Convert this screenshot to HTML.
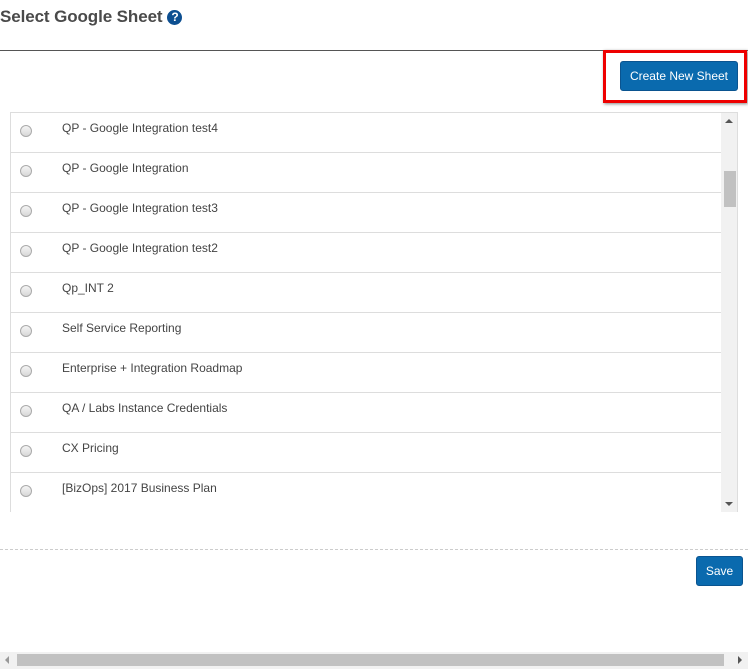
<!DOCTYPE html>
<html><head><style>
body{margin:0;width:748px;height:669px;overflow:hidden;background:#fff;font-family:"Liberation Sans",sans-serif;position:relative}
.a{position:absolute}
h1{position:absolute;left:0;top:7px;margin:0;font-size:17px;font-weight:bold;color:#4a4a4a;letter-spacing:-0.1px}
.q{display:inline-block;width:15px;height:15px;border-radius:50%;background:#0d4f91;color:#fff;font-size:12px;text-align:center;line-height:15px;vertical-align:1px;margin-left:5px}
.btn{background:#0a6aae;border:1px solid #0a5490;border-radius:3px;color:#fff;font-size:12px;text-align:center;box-sizing:border-box}
.row{position:absolute;left:0;width:710px;height:40px;border-bottom:1px solid #ddd;box-sizing:border-box}
.row span{position:absolute;left:51px;top:8px;font-size:12px;color:#444}
.row i{position:absolute;left:9px;top:12px;width:10px;height:10px;border-radius:50%;border:1px solid #aaa;background:linear-gradient(#f4f4f4,#d8d8d8)}
</style></head><body>
<h1>Select Google Sheet<span class="q">?</span></h1>
<div class="a" style="left:0;top:50px;width:748px;height:1px;background:#555"></div>
<div class="a" style="left:603px;top:50px;width:138px;height:47px;border:3px solid #e00;box-shadow:1px 1px 3px #888"></div>
<div class="a btn" style="left:620px;top:61px;width:118px;height:30px;line-height:28px">Create New Sheet</div>
<div class="a" style="left:10px;top:112px;width:728px;height:400px;border:1px solid #ddd;border-bottom:none;box-sizing:border-box;overflow:hidden">
<div class="row" style="top:0"><i></i><span>QP - Google Integration test4</span></div>
<div class="row" style="top:40px"><i></i><span>QP - Google Integration</span></div>
<div class="row" style="top:80px"><i></i><span>QP - Google Integration test3</span></div>
<div class="row" style="top:120px"><i></i><span>QP - Google Integration test2</span></div>
<div class="row" style="top:160px"><i></i><span>Qp_INT 2</span></div>
<div class="row" style="top:200px"><i></i><span>Self Service Reporting</span></div>
<div class="row" style="top:240px"><i></i><span>Enterprise + Integration Roadmap</span></div>
<div class="row" style="top:280px"><i></i><span>QA / Labs Instance Credentials</span></div>
<div class="row" style="top:320px"><i></i><span>CX Pricing</span></div>
<div class="row" style="top:360px;border:none"><i></i><span>[BizOps] 2017 Business Plan</span></div>
<div class="a" style="left:710px;top:0;width:17px;height:400px;background:#f1f1f1"></div>
<div class="a" style="left:713px;top:58px;width:12px;height:36px;background:#c1c1c1"></div>
<div class="a" style="left:714px;top:6px;border:4px solid transparent;border-bottom:4px solid #555;border-top:none;width:0;height:0"></div>
<div class="a" style="left:714px;top:389px;border:4px solid transparent;border-top:4px solid #555;border-bottom:none;width:0;height:0"></div>
</div>
<div class="a" style="left:0;top:549px;width:748px;border-top:1px dashed #ccc"></div>
<div class="a btn" style="left:696px;top:556px;width:47px;height:30px;line-height:28px">Save</div>
<div class="a" style="left:0;top:652px;width:748px;height:17px;background:#f1f1f1"></div>
<div class="a" style="left:17px;top:654px;width:707px;height:12px;background:#c1c1c1"></div>
<div class="a" style="left:5px;top:656px;border:4px solid transparent;border-right:4px solid #999;border-left:none;width:0;height:0"></div>
<div class="a" style="left:738px;top:656px;border:4px solid transparent;border-left:4px solid #555;border-right:none;width:0;height:0"></div>
</body></html>
